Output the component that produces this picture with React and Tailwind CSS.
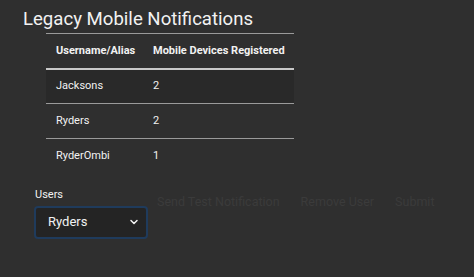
import { ChevronDown } from "lucide-react";

const users = [
  { name: "Jacksons", devices: 2 },
  { name: "Ryders", devices: 2 },
  { name: "RyderOmbi", devices: 1 },
];

export default function App() {
  return (
    <div
      className="w-[474px] h-[277px] bg-[#2f2f2f] text-[#f2f2f2] overflow-hidden"
      style={{ fontFamily: "Roboto, 'Liberation Sans', sans-serif" }}
    >
      <h1 className="pl-[23px] pt-[7px] text-[18.6px] leading-[24px]">Legacy Mobile Notifications</h1>

      <table className="ml-[46px] mt-[2px] w-[248px] table-fixed border-collapse text-[11px]">
        <thead>
          <tr className="border-t border-[#9a9a9a] border-b-2 border-b-[#c8c8c8]">
            <th className="h-[35px] pl-[10px] text-left font-bold w-[107px]">Username/Alias</th>
            <th className="h-[35px] text-left font-bold">Mobile Devices Registered</th>
          </tr>
        </thead>
        <tbody>
          {users.map((u, i) => (
            <tr
              key={u.name}
              className={
                (i === 0 ? "bg-[#292929] " : "") +
                (i < users.length - 1 ? "border-b border-[#9a9a9a]" : "")
              }
            >
              <td className="h-[35px] pl-[10px]">{u.name}</td>
              <td className="h-[35px]">{u.devices}</td>
            </tr>
          ))}
        </tbody>
      </table>

      <div className="flex items-start pl-[34px] pt-[14px]">
        <div className="flex flex-col">
          <label className="text-[11px] leading-[14px] pl-px">Users</label>
          <div className="mt-[4px] w-[114px] h-[33px] rounded-[4px] border-2 border-[#1f3b5c] bg-[#242424] flex items-center justify-between pl-[12px] pr-[6px]">
            <span className="text-[13px]">Ryders</span>
            <ChevronDown size={12} strokeWidth={3} />
          </div>
        </div>
        <div className="flex gap-[21px] pl-[9px] pt-[5px] text-[12.5px] text-[#3b3b3b]">
          <button>Send Test Notification</button>
          <button>Remove User</button>
          <button>Submit</button>
        </div>
      </div>
    </div>
  );
}
